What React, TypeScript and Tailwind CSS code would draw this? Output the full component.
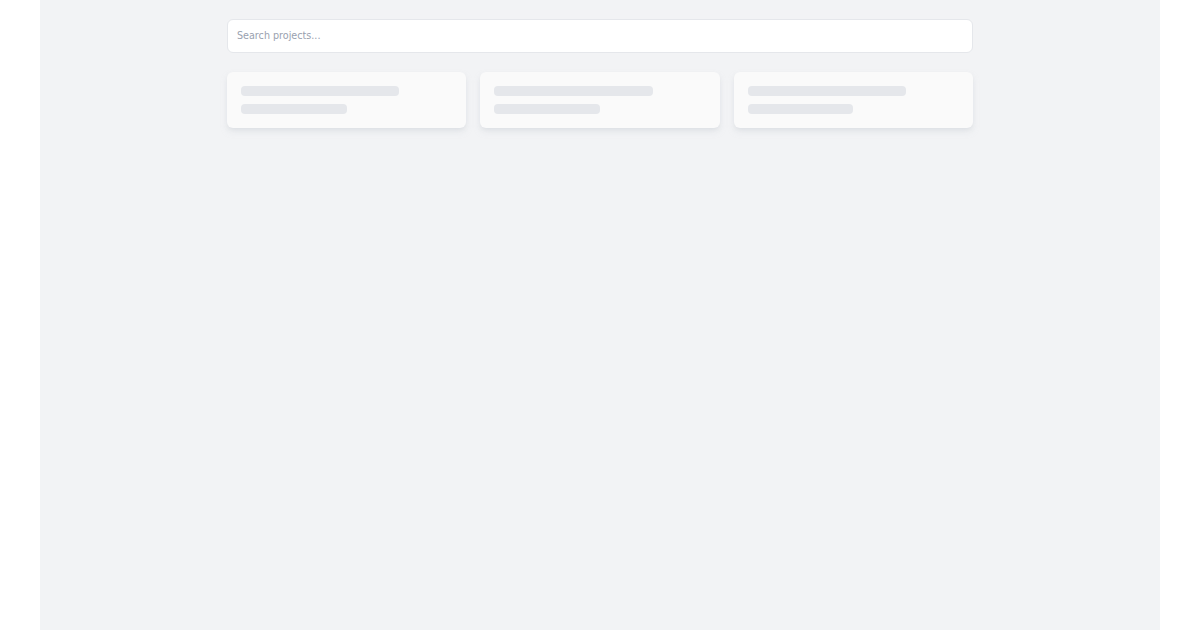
export default function App() {
    const cards = [0, 1, 2];

    return (
        <div className="min-h-screen bg-white px-10" style={{ fontFamily: '"DejaVu Sans", sans-serif' }}>
            <div className="min-h-screen bg-[#f2f3f5]">
                <div className="mx-auto w-[746px] pt-[19px]">
                    <input
                        type="text"
                        placeholder="Search projects..."
                        className="block h-[34px] w-full rounded-md border border-gray-200 bg-white px-[9px] pb-px text-[9.6px] text-gray-700 placeholder:text-gray-400 outline-none"
                    />
                    <div className="mt-[19px] grid grid-cols-3 gap-3.5">
                        {cards.map((i) => (
                            <div key={i} className="rounded-md bg-[#fafafa] p-3.5 shadow-md shadow-gray-300/50">
                                <div className="mb-2 h-2.5 w-3/4 rounded-sm bg-gray-200" />
                                <div className="h-2.5 w-1/2 rounded-sm bg-gray-200" />
                            </div>
                        ))}
                    </div>
                </div>
            </div>
        </div>
    );
}
